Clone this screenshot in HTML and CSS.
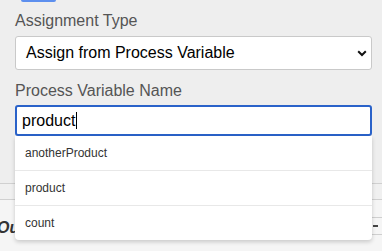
FILE: index.html
```html
<!DOCTYPE html>
<html>
<head>
<meta charset="utf-8">
<link rel="stylesheet" href="styles.css">
</head>
<body>
<div class="page">
  <div class="top-button"></div>
  <div class="form">
    <div class="label first">Assignment Type</div>
    <div class="select">
      <span>Assign from Process Variable</span>
      <svg class="chev" width="10" height="7" viewBox="0 0 10 7"><path d="M1.2 1.3 L5 5 L8.8 1.3" fill="none" stroke="#111" stroke-width="2"/></svg>
    </div>
    <div class="label second">Process Variable Name</div>
    <div class="field">
      <div class="input"><span class="val">product</span><span class="caret"></span></div>
      <ul class="menu">
        <li>anotherProduct</li>
        <li>product</li>
        <li>count</li>
      </ul>
    </div>
  </div>
  <div class="band"></div>
  <div class="section">
    <div class="section-head">
      <span class="title">Outputs</span>
      <span class="remove"><span class="dash"></span></span>
    </div>
  </div>
</div>
</body>
</html>
```
FILE: styles.css
```css
* { box-sizing: border-box; }
html, body { margin: 0; padding: 0; }
body {
  width: 382px;
  height: 251px;
  overflow: hidden;
  background: #eeeeee;
  font-family: "Liberation Sans", Arial, sans-serif;
}
.page { position: relative; }
.top-button {
  margin-left: 21px;
  width: 35px;
  height: 2px;
  background: #5d8fee;
  border-radius: 0 0 3px 3px;
}
.form { padding: 0 10px 0 15px; }
.label {
  font-size: 16px;
  line-height: 18px;
  color: #555;
}
.label.first { margin-top: 10px; }
.label.second { margin-top: 12px; }
.select {
  margin-top: 6px;
  height: 34px;
  background: #fff;
  border: 1px solid #c9c9c9;
  border-radius: 3px;
  display: flex;
  align-items: center;
  justify-content: space-between;
  padding: 0 4px 0 10px;
  font-size: 16px;
  color: #000;
}
.chev { margin-top: 1px; }
.field { position: relative; margin-top: 5px; }
.input {
  height: 31px;
  background: #fff;
  border: 2px solid #2a62c9;
  border-radius: 3px;
  display: flex;
  align-items: center;
  padding-left: 5px;
  font-size: 16px;
  color: #000;
}
.caret {
  display: inline-block;
  width: 1px;
  height: 17px;
  background: #000;
  margin-left: 1px;
}
.menu {
  position: absolute;
  left: 0;
  right: 0;
  top: 31px;
  margin: 0;
  padding: 0;
  list-style: none;
  background: #fff;
  border-radius: 0 0 4px 4px;
  box-shadow: 0 2px 4px rgba(0,0,0,0.18);
  z-index: 2;
}
.menu li {
  height: 35px;
  display: flex;
  align-items: center;
  padding-left: 10px;
  font-size: 12px;
  color: #333;
  border-bottom: 1px solid #e8e8e8;
}
.menu li:last-child { border-bottom: 0; height: 34px; }
.band {
  margin-top: 47px;
  height: 17px;
  border-top: 1px solid #d0d0d0;
  border-bottom: 1px solid #d0d0d0;
  background: #f0f0f0;
}
.section {
  background: #f5f5f5;
  height: 60px;
}
.section-head {
  display: flex;
  align-items: center;
  justify-content: space-between;
  padding-top: 15px;
}
.title {
  margin-left: -3px;
  font-size: 16px;
  font-weight: bold;
  font-style: italic;
  color: #333;
  line-height: 18px;
  padding-top: 4px;
}
.remove {
  width: 10px;
  height: 18px;
  border-top: 1px solid #cfcfcf;
  border-bottom: 1px solid #cfcfcf;
  display: flex;
  align-items: center;
  padding-left: 1px;
}
.dash {
  width: 5px;
  height: 2px;
  background: #444;
}
```
